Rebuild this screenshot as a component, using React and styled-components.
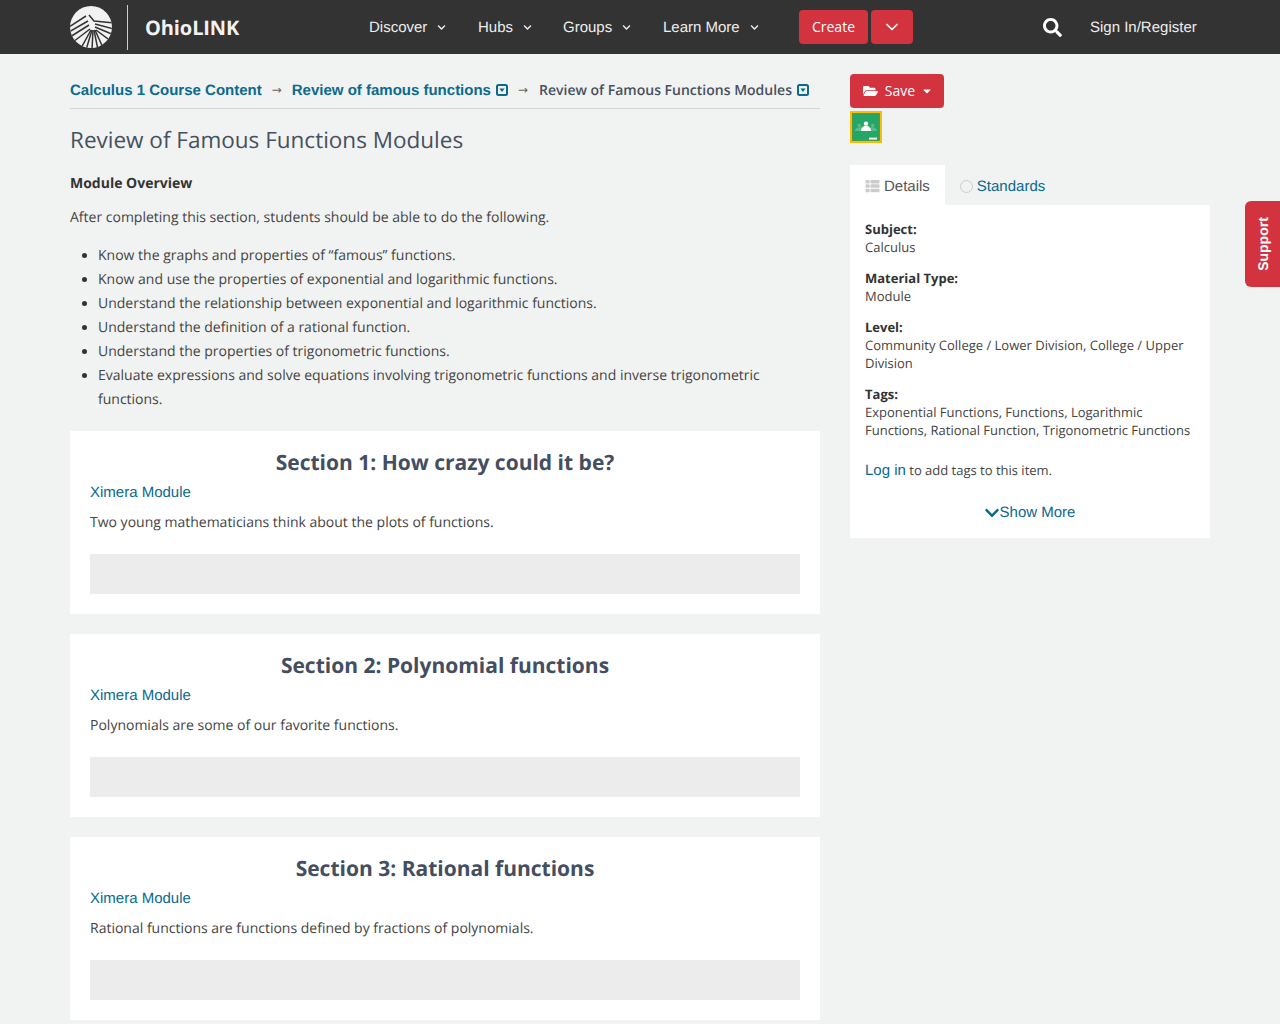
import React from "react";
import styled, { createGlobalStyle } from "styled-components";
import { FaSearch, FaChevronDown, FaFolderOpen, FaCaretDown, FaThList } from "react-icons/fa";
import { ChevronDown } from "lucide-react";

const Global = createGlobalStyle`
  html, body { margin: 0; padding: 0; }
  body {
    background: #f1f3f2;
    font-family: "Open Sans", sans-serif;
    font-size: 14px;
    color: #444;
    overflow: hidden;
    height: 1024px;
    text-rendering: geometricPrecision;
  }
  a { color: #0a6a8f; text-decoration: none; }
`;

const Header = styled.header`
  height: 54px;
  background: #333;
  display: flex;
  align-items: center;
  padding: 0 70px;
`;
const Logo = styled.div`
  width: 299px;
  display: flex;
  align-items: center;
  flex: none;
`;
const LogoRule = styled.div`
  width: 1px;
  height: 45px;
  background: #ccc;
  margin: 0 17px 0 15px;
`;
const LogoText = styled.span`
  font-family: "Open Sans", sans-serif;
  font-weight: 700;
  font-size: 20px;
  color: #f2f2f2;
  letter-spacing: -0.1px;
`;
const Nav = styled.nav`
  display: flex;
  align-items: center;
  width: 430px;
  flex: none;
`;
const NavItem = styled.div`
  display: flex;
  align-items: center;
  font-family: "Liberation Sans", sans-serif;
  font-size: 15px;
  color: #eee;
  width: ${(p) => p.$w}px;
  svg { margin-left: 10px; width: 9px; height: 9px; }
`;
const RedButton = styled.button`
  height: 34px;
  border: 0;
  border-radius: 4px;
  background: #d2333f;
  color: #fff;
  font-family: "Open Sans", sans-serif;
  font-size: 14px;
  display: flex;
  align-items: center;
  justify-content: center;
  padding: 0;
`;
const ButtonLabel = styled.span`
  margin-bottom: 2px;
`;
const CreateButton = styled(RedButton)`
  width: 69px;
  margin-right: 3px;
`;
const CreateCaret = styled(RedButton)`
  width: 42px;
`;
const HeaderRight = styled.div`
  display: flex;
  align-items: center;
  margin-left: 130px;
`;
const SignIn = styled.span`
  font-family: "Liberation Sans", sans-serif;
  font-size: 15px;
  color: #eee;
  margin-left: 28px;
`;

const Page = styled.div`
  display: flex;
  gap: 30px;
  padding: 20px 70px 0;
`;
const Main = styled.main`
  width: 750px;
  flex: none;
`;
const Side = styled.aside`
  width: 360px;
  flex: none;
`;
const Crumbs = styled.div`
  display: flex;
  align-items: center;
  height: 32px;
  padding-bottom: 2px;
  border-bottom: 1px solid #d5d5d5;
  color: #47505f;
  white-space: nowrap;
`;
const CrumbLink = styled.a`
  font-family: "Liberation Sans", sans-serif;
  font-weight: 700;
  font-size: 15px;
  display: flex;
  align-items: center;
`;
const CrumbCurrent = styled.span`
  display: flex;
  align-items: center;
  font-size: 14px;
  font-weight: 600;
  margin-left: 1px;
`;
const Arrow = styled.span`
  color: #666;
  font-family: "DejaVu Sans", sans-serif;
  font-size: 12px;
  margin: 0 10px;
`;
const CrumbIconBox = styled.svg`
  width: 12px;
  height: 12px;
  margin-left: 5px;
  flex: none;
`;
const Title = styled.h1`
  font-size: 22.5px;
  font-weight: 400;
  color: #47505f;
  margin: 15px 0 0;
  line-height: 32px;
`;
const OverviewHead = styled.p`
  font-weight: 700;
  color: #333;
  margin: 16px 0 0;
  line-height: 24px;
`;
const Para = styled.p`
  margin: 10px 0 0;
  line-height: 24px;
`;
const Bullets = styled.ul`
  margin: 14px 0 19px;
  padding: 0 40px 0 28px;
  li { line-height: 24px; }
  li::marker { color: #333; }
`;
const Card = styled.section`
  background: #fff;
  padding: 17px 20px 20px;
  margin-bottom: 20px;
`;
const CardTitle = styled.h2`
  font-size: 21px;
  font-weight: 700;
  color: #434e60;
  text-align: center;
  margin: 0;
  line-height: 30px;
`;
const ModuleLink = styled.a`
  display: block;
  font-family: "Liberation Sans", sans-serif;
  font-size: 15px;
  line-height: 20px;
  margin-top: 5px;
`;
const CardText = styled.p`
  margin: 8px 0 0;
  line-height: 24px;
`;
const Placeholder = styled.div`
  height: 40px;
  background: #ececec;
  margin-top: 19px;
`;
const SaveButton = styled(RedButton)`
  width: 94px;
  gap: 7px;
  svg:first-child { width: 15px; height: 14px; margin-left: 1px; }
  svg:last-child { width: 10px; height: 12px; }
`;
const ClassroomBadge = styled.div`
  width: 32px;
  height: 32px;
  margin-top: 3px;
  svg { display: block; }
`;
const Tabs = styled.div`
  display: flex;
  margin-top: 22px;
  height: 40px;
  font-family: "Liberation Sans", sans-serif;
  font-size: 15px;
`;
const Tab = styled.div`
  display: flex;
  align-items: center;
  padding: 2px 15px 0;
  background: ${(p) => (p.$active ? "#fff" : "transparent")};
  color: ${(p) => (p.$active ? "#555" : "#0a6a8f")};
  svg { color: #ccc; width: 15px; height: 14px; margin-right: 4px; }
`;
const Ring = styled.span`
  width: 11px;
  height: 11px;
  border: 1.5px solid #ccc;
  border-radius: 50%;
  margin-right: 4px;
`;
const Details = styled.div`
  background: #fff;
  padding: 15px 15px 15px;
  font-size: 13px;
  line-height: 18px;
`;
const Field = styled.div`
  margin-bottom: 13px;
  strong { display: block; font-weight: 700; color: #333; }
`;
const LoginLine = styled.div`
  margin-top: 22px;
  a { font-family: "Liberation Sans", sans-serif; font-size: 15px; }
`;
const ShowMore = styled.a`
  display: flex;
  align-items: center;
  justify-content: center;
  font-family: "Liberation Sans", sans-serif;
  font-size: 15px;
  margin-top: 23px;
  line-height: 20px;
  svg { width: 16px; height: 16px; margin-left: -1px; }
`;
const SupportTab = styled.div`
  position: absolute;
  top: 201px;
  right: 0;
  width: 35px;
  height: 86px;
  background: #d2333f;
  border-radius: 6px 0 0 6px;
  color: #fff;
  font-family: "Liberation Sans", sans-serif;
  font-weight: 700;
  font-size: 14px;
  display: flex;
  align-items: center;
  justify-content: center;
  span { transform: rotate(-90deg); }
`;

const LogoMark = () => (
  <svg width="42" height="42" viewBox="0 0 42 42">
    <defs>
      <clipPath id="disc"><circle cx="21" cy="21" r="21" /></clipPath>
    </defs>
    <circle cx="21" cy="21" r="21" fill="#f2f2f2" />
    <g clipPath="url(#disc)" stroke="#333" fill="none" strokeWidth="1.5">
      <path d="M16 10 L-1 21" />
      <path d="M18 15 L-1 26" />
      <path d="M19 19 L0 31" />
      <path d="M20 23 L3 36" />
      <path d="M19 9 L24 15 L44 17" />
      <path d="M25 18 L44 23" />
      <path d="M25 21 L44 29" />
      <path d="M26 24 L42 36" />
      <path d="M21 24 L10 44" />
      <path d="M22 24 L16 44" />
      <path d="M23 24 L22 44" />
      <path d="M24 24 L28 44" />
      <path d="M25 24 L34 44" />
    </g>
  </svg>
);

const ClassroomIcon = () => (
  <svg width="32" height="32" viewBox="0 0 32 32">
    <rect width="32" height="32" fill="#fbbc04" />
    <rect x="2.5" y="2.5" width="27" height="27" fill="#25a667" stroke="#1e8e5a" strokeWidth="0.6" />
    <circle cx="9.3" cy="14.5" r="1.7" fill="#57bb8a" />
    <circle cx="22.7" cy="14.5" r="1.7" fill="#57bb8a" />
    <path d="M5 20 c0-4 7-5 8-2 v2z M19 18 c1-3 8-2 8 2 h-8z" fill="#57bb8a" />
    <circle cx="16" cy="12.6" r="2.2" fill="#fff" />
    <path d="M11 20 c0-7 10-7 10 0z" fill="#fff" />
    <rect x="19" y="26.6" width="8" height="2" fill="#f1f1f1" />
  </svg>
);

const CrumbIcon = () => (
  <CrumbIconBox viewBox="0 0 12 12">
    <rect x="1" y="1" width="10" height="10" rx="1.5" fill="none" stroke="#0a6a8f" strokeWidth="2" />
    <path d="M3.4 4.6 H8.6 L6 8z" fill="#0a6a8f" />
  </CrumbIconBox>
);

const Caret = () => <FaChevronDown />;

const sections = [
  ["Section 1: How crazy could it be?", "Two young mathematicians think about the plots of functions."],
  ["Section 2: Polynomial functions", "Polynomials are some of our favorite functions."],
  ["Section 3: Rational functions", "Rational functions are functions defined by fractions of polynomials."],
];

const goals = [
  "Know the graphs and properties of “famous” functions.",
  "Know and use the properties of exponential and logarithmic functions.",
  "Understand the relationship between exponential and logarithmic functions.",
  "Understand the definition of a rational function.",
  "Understand the properties of trigonometric functions.",
  "Evaluate expressions and solve equations involving trigonometric functions and inverse trigonometric functions.",
];

const App = () => {
  return (
    <>
      <Global />
      <Header>
        <Logo>
          <LogoMark />
          <LogoRule />
          <LogoText>OhioLINK</LogoText>
        </Logo>
        <Nav>
          <NavItem $w={109}>Discover<Caret /></NavItem>
          <NavItem $w={85}>Hubs<Caret /></NavItem>
          <NavItem $w={100}>Groups<Caret /></NavItem>
          <NavItem $w={136}>Learn More<Caret /></NavItem>
        </Nav>
        <CreateButton><ButtonLabel>Create</ButtonLabel></CreateButton>
        <CreateCaret><ChevronDown size={20} strokeWidth={2} /></CreateCaret>
        <HeaderRight>
          <FaSearch size={19} color="#fff" />
          <SignIn>Sign In/Register</SignIn>
        </HeaderRight>
      </Header>
      <Page>
        <Main>
          <Crumbs>
            <CrumbLink>Calculus 1 Course Content</CrumbLink>
            <Arrow>→</Arrow>
            <CrumbLink>Review of famous functions<CrumbIcon /></CrumbLink>
            <Arrow>→</Arrow>
            <CrumbCurrent>Review of Famous Functions Modules<CrumbIcon /></CrumbCurrent>
          </Crumbs>
          <Title>Review of Famous Functions Modules</Title>
          <OverviewHead>Module Overview</OverviewHead>
          <Para>After completing this section, students should be able to do the following.</Para>
          <Bullets>
            {goals.map((g) => <li key={g}>{g}</li>)}
          </Bullets>
          {sections.map(([title, text]) => (
            <Card key={title}>
              <CardTitle>{title}</CardTitle>
              <ModuleLink>Ximera Module</ModuleLink>
              <CardText>{text}</CardText>
              <Placeholder />
            </Card>
          ))}
        </Main>
        <Side>
          <SaveButton><FaFolderOpen /><ButtonLabel>Save</ButtonLabel><FaCaretDown /></SaveButton>
          <ClassroomBadge><ClassroomIcon /></ClassroomBadge>
          <Tabs>
            <Tab $active><FaThList />Details</Tab>
            <Tab><Ring />Standards</Tab>
          </Tabs>
          <Details>
            <Field><strong>Subject:</strong>Calculus</Field>
            <Field><strong>Material Type:</strong>Module</Field>
            <Field><strong>Level:</strong>Community College / Lower Division, College / Upper Division</Field>
            <Field><strong>Tags:</strong>Exponential Functions, Functions, Logarithmic Functions, Rational Function, Trigonometric Functions</Field>
            <LoginLine><a>Log in</a> to add tags to this item.</LoginLine>
            <ShowMore><FaChevronDown />Show More</ShowMore>
          </Details>
        </Side>
      </Page>
      <SupportTab><span>Support</span></SupportTab>
    </>
  );
};

export default App;
